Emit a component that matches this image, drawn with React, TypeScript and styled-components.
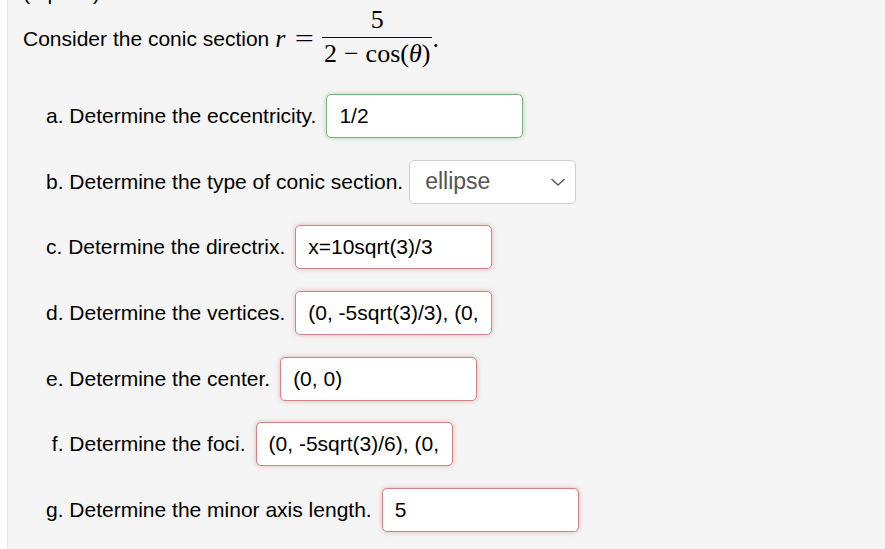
import React from 'react';
import styled, { createGlobalStyle, css } from 'styled-components';

const GlobalStyle = createGlobalStyle`
  html, body {
    margin: 0;
    padding: 0;
    background: #ffffff;
    overflow: hidden;
  }
`;

const Panel = styled.div`
  margin-left: 7px;
  height: 549px;
  box-sizing: border-box;
  border-left: 1px solid #e3e3e3;
  background: #f5f5f5;
  padding-left: 15px;
  font-family: 'Liberation Sans', Arial, sans-serif;
  font-size: 21px;
  color: #000;
  overflow: hidden;
`;

const Points = styled.div`
  margin-top: -19px;
  line-height: 24px;
  height: 24px;
`;

const Intro = styled.div`
  display: flex;
  align-items: center;
  margin-top: 3px;
  white-space: pre;
`;

const IntroText = styled.span`
  line-height: 24px;
  padding-top: 4px;
`;

const MathText = styled.span<{ $italic?: boolean }>`
  font-family: 'Liberation Serif', 'Times New Roman', serif;
  font-size: 26px;
  line-height: 24px;
  padding-top: 4px;
  ${(p) =>
    p.$italic &&
    css`
      font-style: italic;
    `}
`;

const Equals = styled(MathText)`
  margin: 0 10px 0 12px;
  display: inline-block;
  transform: scaleX(1.3);
`;

const Fraction = styled.span`
  display: inline-flex;
  flex-direction: column;
  align-items: center;
  font-family: 'Liberation Serif', 'Times New Roman', serif;
  font-size: 26px;
`;

const Numerator = styled.span`
  line-height: 24px;
  padding-bottom: 5px;
`;

const Bar = styled.span`
  align-self: stretch;
  height: 1px;
  background: #111;
`;

const Denominator = styled.span`
  line-height: 24px;
  padding: 4px 2px 0;
`;

const Italic = styled.i`
  font-style: italic;
`;

const Minus = styled.span`
  margin: 0 7px;
`;

const Rows = styled.div`
  display: flex;
  flex-direction: column;
  gap: 21.7px;
  margin-top: 28px;
  padding-left: 23px;
`;

const Row = styled.div`
  display: flex;
  align-items: center;
  gap: 10px;
  height: 44px;
`;

const Label = styled.span`
  white-space: pre;
`;

const AnswerBox = styled.div<{ $state: 'correct' | 'wrong' }>`
  box-sizing: border-box;
  width: 197px;
  height: 44px;
  padding: 0 12px;
  display: flex;
  align-items: center;
  background: #fff;
  border-radius: 5px;
  white-space: nowrap;
  overflow: hidden;
  color: #000;
  ${(p) =>
    p.$state === 'correct'
      ? css`
          border: 1px solid #7fb27f;
          box-shadow: 0 0 5px rgba(60, 140, 60, 0.35);
        `
      : css`
          border: 1px solid #d08484;
          box-shadow: 0 0 5px rgba(190, 60, 60, 0.35);
        `}
`;

const Select = styled.div`
  box-sizing: border-box;
  width: 167px;
  height: 44px;
  margin-left: -4px;
  padding: 0 9px 0 15px;
  display: flex;
  align-items: center;
  justify-content: space-between;
  background: #fff;
  border: 1px solid #cfcfcf;
  border-radius: 5px;
  color: #555;
  font-size: 23px;
`;

const Chevron = () => (
  <svg width="16" height="10" viewBox="0 0 16 10">
    <path d="M1.5 2 L8 8 L14.5 2" fill="none" stroke="#555" strokeWidth="1.4" />
  </svg>
);

const answers: { label: string; value: string; state: 'correct' | 'wrong' }[] = [
  { label: 'c. Determine the directrix.', value: 'x=10sqrt(3)/3', state: 'wrong' },
  { label: 'd. Determine the vertices.', value: '(0, -5sqrt(3)/3), (0,', state: 'wrong' },
  { label: 'e. Determine the center.', value: '(0, 0)', state: 'wrong' },
  { label: ' f. Determine the foci.', value: '(0, -5sqrt(3)/6), (0,', state: 'wrong' },
  { label: 'g. Determine the minor axis length.', value: '5', state: 'wrong' },
];

const App = () => {
  return (
    <>
      <GlobalStyle />
      <Panel>
        <Points>(1 point)</Points>
        <Intro>
          <IntroText>Consider the conic section </IntroText>
          <MathText $italic>r</MathText>
          <Equals>=</Equals>
          <Fraction>
            <Numerator>5</Numerator>
            <Bar />
            <Denominator>
              2<Minus>−</Minus>cos(<Italic>θ</Italic>)
            </Denominator>
          </Fraction>
          <MathText>.</MathText>
        </Intro>
        <Rows>
          <Row>
            <Label>a. Determine the eccentricity.</Label>
            <AnswerBox $state="correct">1/2</AnswerBox>
          </Row>
          <Row>
            <Label>b. Determine the type of conic section.</Label>
            <Select>
              <span>ellipse</span>
              <Chevron />
            </Select>
          </Row>
          {answers.map((a, i) => (
            <Row key={i}>
              <Label>{a.label}</Label>
              <AnswerBox $state={a.state}>{a.value}</AnswerBox>
            </Row>
          ))}
        </Rows>
      </Panel>
    </>
  );
};

export default App;
